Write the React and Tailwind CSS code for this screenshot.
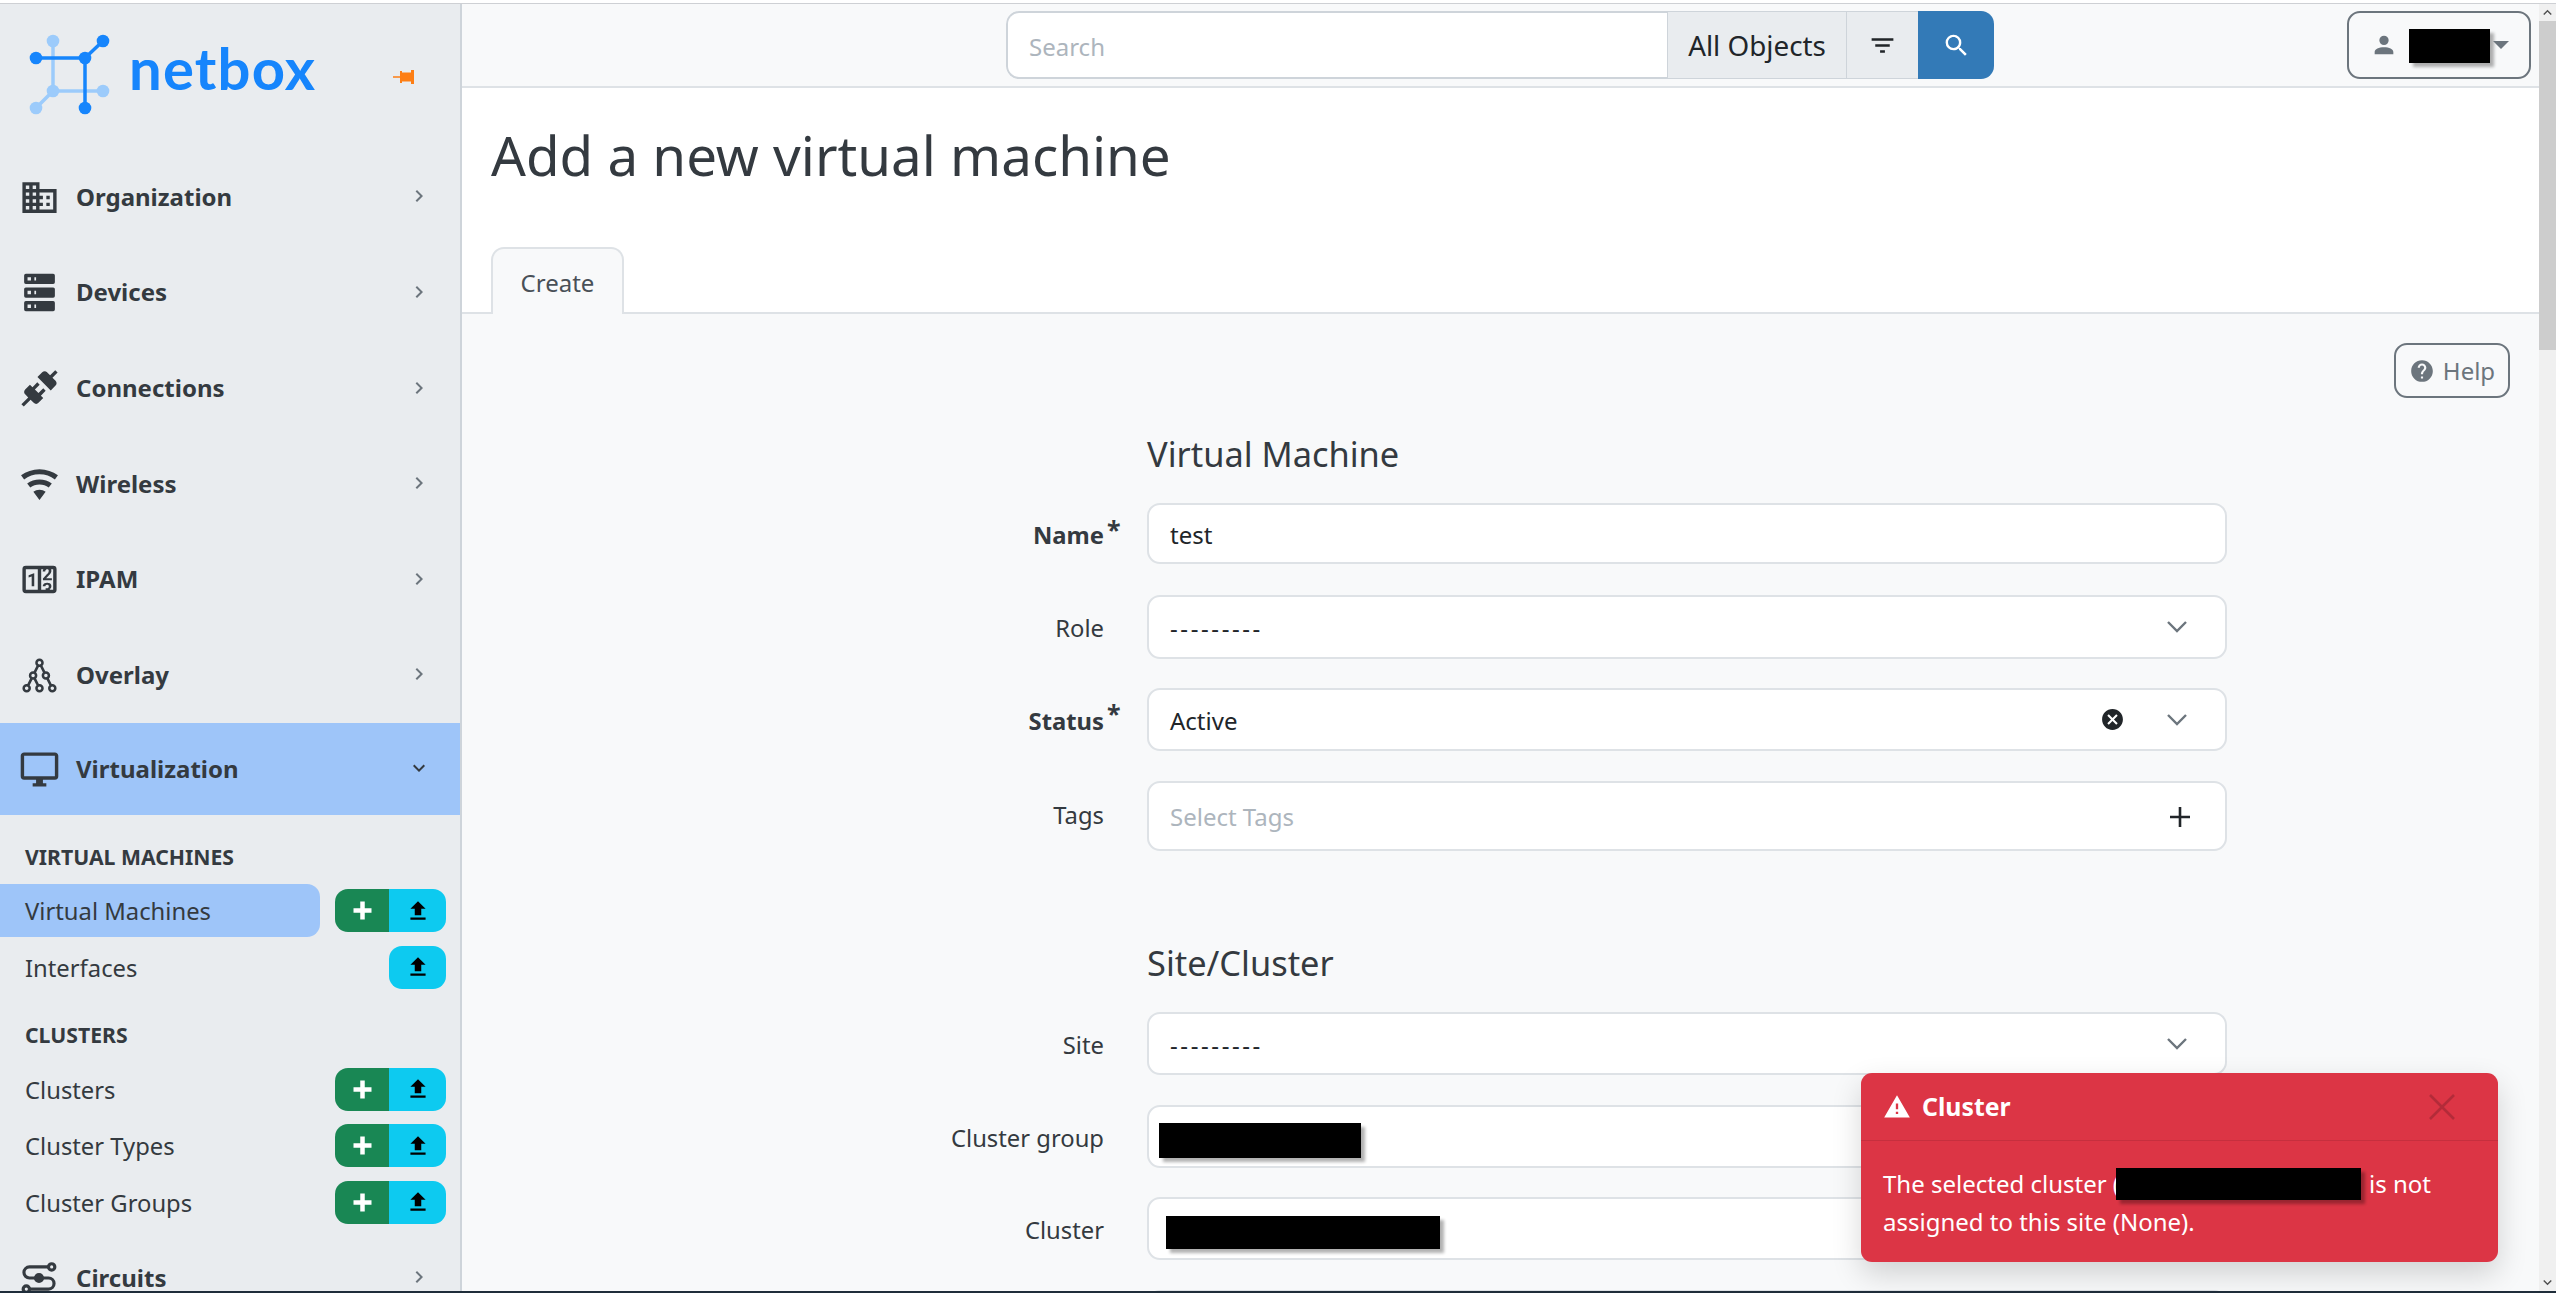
import React from 'react'

// Material Design icon paths used by the nav and the toolbar
const MDI = {
  domain: 'M18,15H16V17H18M18,11H16V13H18M20,19H12V17H14V15H12V13H14V11H12V9H20M10,7H8V5H10M10,11H8V9H10M10,15H8V13H10M10,19H8V17H10M6,7H4V5H6M6,11H4V9H6M6,15H4V13H6M6,19H4V17H6M12,7V3H2V21H22V7H12Z',
  server: 'M4,1H20A1,1 0 0,1 21,2V6A1,1 0 0,1 20,7H4A1,1 0 0,1 3,6V2A1,1 0 0,1 4,1M4,9H20A1,1 0 0,1 21,10V14A1,1 0 0,1 20,15H4A1,1 0 0,1 3,14V10A1,1 0 0,1 4,9M4,17H20A1,1 0 0,1 21,18V22A1,1 0 0,1 20,23H4A1,1 0 0,1 3,22V18A1,1 0 0,1 4,17M9,5H10V3H9V5M9,13H10V11H9V13M9,21H10V19H9V21M5,3V5H7V3H5M5,11V13H7V11H5M5,19V21H7V19H5Z',
  connection: 'M21.4 7.5C22.2 8.3 22.2 9.6 21.4 10.3L18.6 13.1L10.8 5.3L13.6 2.5C14.4 1.7 15.7 1.7 16.4 2.5L18.2 4.3L21.2 1.3L22.6 2.7L19.6 5.7L21.4 7.5M15.6 13.3L14.2 11.9L11.4 14.7L9.3 12.6L12.1 9.8L10.7 8.4L7.9 11.2L6.4 9.8L3.6 12.6C2.8 13.4 2.8 14.7 3.6 15.4L5.4 17.2L1.4 21.2L2.8 22.6L6.8 18.6L8.6 20.4C9.4 21.2 10.7 21.2 11.4 20.4L14.2 17.6L12.8 16.2L15.6 13.3Z',
  wifi: 'M12,21L15.6,16.2C14.6,15.45 13.35,15 12,15C10.65,15 9.4,15.45 8.4,16.2L12,21M12,3C7.95,3 4.21,4.34 1.2,6.6L3,9C5.5,7.12 8.62,6 12,6C15.38,6 18.5,7.12 21,9L22.8,6.6C19.79,4.34 16.05,3 12,3M12,9C9.3,9 6.81,9.89 4.8,11.4L6.6,13.8C8.1,12.67 9.97,12 12,12C14.03,12 15.9,12.67 17.4,13.8L19.2,11.4C17.19,9.89 14.7,9 12,9Z',
  counter: 'M4,4H20A2,2 0 0,1 22,6V18A2,2 0 0,1 20,20H4A2,2 0 0,1 2,18V6A2,2 0 0,1 4,4M4,6V18H11V6H4M20,18V6H18.76C19,6.54 18.95,7.07 18.95,7.13C18.88,7.8 18.41,8.5 18.24,8.75L15.91,11.3L19.23,11.28L19.24,12.5L14.04,12.47L14,11.47C14,11.47 17.05,8.24 17.2,7.95C17.34,7.67 17.91,6 16.5,6C15.27,6.05 15.41,7.3 15.41,7.3L13.87,7.31C13.87,7.31 13.88,6.65 14.25,6H13V18H15.58L15.57,17.14L16.54,17.13C16.54,17.13 17.45,16.97 17.46,16.08C17.5,15.08 16.65,15.08 16.5,15.08C16.37,15.08 15.43,15.13 15.43,15.95H13.91C13.91,15.95 13.95,13.89 16.5,13.89C19.1,13.89 18.96,15.91 18.96,15.91C18.96,15.91 19,17.16 17.85,17.63L18.37,18H20M8.92,16H7.42V10.2L5.62,10.76V9.53L8.76,8.41H8.92V16Z',
  graph: 'M19.5 17C19.37 17 19.24 17 19.11 17.04L17.5 13.79C17.95 13.34 18.25 12.7 18.25 12C18.25 10.62 17.13 9.5 15.75 9.5C15.62 9.5 15.5 9.5 15.36 9.54L13.73 6.29C14.21 5.84 14.5 5.2 14.5 4.5C14.5 3.12 13.38 2 12 2S9.5 3.12 9.5 4.5C9.5 5.2 9.79 5.84 10.26 6.29L8.64 9.54C8.5 9.5 8.38 9.5 8.25 9.5C6.87 9.5 5.75 10.62 5.75 12C5.75 12.7 6.05 13.34 6.5 13.79L4.89 17.04C4.76 17 4.63 17 4.5 17C3.12 17 2 18.12 2 19.5C2 20.88 3.12 22 4.5 22S7 20.88 7 19.5C7 18.8 6.71 18.16 6.24 17.71L7.86 14.46C8 14.5 8.12 14.5 8.25 14.5C8.38 14.5 8.5 14.5 8.64 14.46L10.27 17.71C9.79 18.16 9.5 18.8 9.5 19.5C9.5 20.88 10.62 22 12 22S14.5 20.88 14.5 19.5C14.5 18.12 13.38 17 12 17C11.87 17 11.74 17 11.61 17.04L10 13.79C10.46 13.34 10.75 12.7 10.75 12S10.46 10.66 10 10.21L11.61 6.96C11.74 7 11.87 7 12 7S12.26 7 12.39 6.96L14 10.21C13.55 10.66 13.25 11.3 13.25 12C13.25 13.38 14.37 14.5 15.75 14.5C15.88 14.5 16 14.5 16.14 14.46L17.77 17.71C17.3 18.16 17 18.8 17 19.5C17 20.88 18.12 22 19.5 22S22 20.88 22 19.5C22 18.12 20.88 17 19.5 17M4.5 20.5C3.95 20.5 3.5 20.05 3.5 19.5S3.95 18.5 4.5 18.5 5.5 18.95 5.5 19.5 5.05 20.5 4.5 20.5M13 19.5C13 20.05 12.55 20.5 12 20.5S11 20.05 11 19.5 11.45 18.5 12 18.5 13 18.95 13 19.5M7.25 12C7.25 11.45 7.7 11 8.25 11S9.25 11.45 9.25 12 8.8 13 8.25 13 7.25 12.55 7.25 12M11 4.5C11 3.95 11.45 3.5 12 3.5S13 3.95 13 4.5 12.55 5.5 12 5.5 11 5.05 11 4.5M14.75 12C14.75 11.45 15.2 11 15.75 11S16.75 11.45 16.75 12 16.3 13 15.75 13 14.75 12.55 14.75 12M19.5 20.5C18.95 20.5 18.5 20.05 18.5 19.5S18.95 18.5 19.5 18.5 20.5 18.95 20.5 19.5 20.05 20.5 19.5 20.5Z',
  monitor: 'M21,16H3V4H21M21,2H3C1.89,2 1,2.89 1,4V16A2,2 0 0,0 3,18H10V20H8V22H16V20H14V18H21A2,2 0 0,0 23,16V4C23,2.89 22.1,2 21,2Z',
  plus: 'M20 14H14V20H10V14H4V10H10V4H14V10H20V14Z',
  upload: 'M9,16V10H5L12,3L19,10H15V16H9M5,20V18H19V20H5Z',
  right: 'M8.59,16.58L13.17,12L8.59,7.41L10,6L16,12L10,18L8.59,16.58Z',
  down: 'M7.41,8.58L12,13.17L16.59,8.58L18,10L12,16L6,10L7.41,8.58Z',
  magnify: 'M9.5,3A6.5,6.5 0 0,1 16,9.5C16,11.11 15.41,12.59 14.44,13.73L14.71,14H15.5L20.5,19L19,20.5L14,15.5V14.71L13.73,14.44C12.59,15.41 11.11,16 9.5,16A6.5,6.5 0 0,1 3,9.5A6.5,6.5 0 0,1 9.5,3M9.5,5C7,5 5,7 5,9.5C5,12 7,14 9.5,14C12,14 14,12 14,9.5C14,7 12,5 9.5,5Z',
  filter: 'M6,13H18V11H6M3,6V8H21V6M10,18H14V16H10V18Z',
  account: 'M12,4A4,4 0 0,1 16,8A4,4 0 0,1 12,12A4,4 0 0,1 8,8A4,4 0 0,1 12,4M12,14C16.42,14 20,15.79 20,18V20H4V18C4,15.79 7.58,14 12,14Z',
  help: 'M15.07,11.25L14.17,12.17C13.45,12.89 13,13.5 13,15H11V14.5C11,13.39 11.45,12.39 12.17,11.67L13.41,10.41C13.78,10.05 14,9.55 14,9C14,7.89 13.1,7 12,7A2,2 0 0,0 10,9H8A4,4 0 0,1 12,5A4,4 0 0,1 16,9C16,9.88 15.64,10.67 15.07,11.25M13,19H11V17H13M12,2A10,10 0 0,0 2,12A10,10 0 0,0 12,22A10,10 0 0,0 22,12C22,6.47 17.5,2 12,2Z',
  alert: 'M13 14H11V9H13M13 18H11V16H13M1 21H23L12 2L1 21Z',
  closeCircle: 'M12,2C17.53,2 22,6.47 22,12C22,17.53 17.53,22 12,22C6.47,22 2,17.53 2,12C2,6.47 6.47,2 12,2M15.59,7L12,10.59L8.41,7L7,8.41L10.59,12L7,15.59L8.41,17L12,13.41L15.59,17L17,15.59L13.41,12L17,8.41L15.59,7Z',
}

function Icon({ d, className }) {
  return (
    <svg viewBox="0 0 24 24" fill="currentColor" className={className}>
      <path d={d} />
    </svg>
  )
}

function CircuitsIcon({ className }) {
  return (
    <svg viewBox="0 0 24 24" fill="none" stroke="currentColor" strokeWidth="2" className={className}>
      <circle cx="20" cy="5" r="2" />
      <circle cx="4" cy="19" r="2" />
      <circle cx="12" cy="12" r="2.2" fill="currentColor" />
      <path d="M18 5H6a3.5 3.5 0 0 0 0 7h12a3.5 3.5 0 0 1 0 7H6" />
    </svg>
  )
}

function Logo() {
  const dark = '#1685fc'
  const light = '#9ccbfb'
  return (
    <svg viewBox="29 34 81 81" className="w-[81px] h-[81px] shrink-0">
      <g stroke={light} strokeWidth="3.5" fill={light}>
        <path d="M53 41V91M53 91H103M53 91L36 108" fill="none" />
        <circle cx="53" cy="41" r="6.3" stroke="none" />
        <circle cx="53" cy="91" r="6.3" stroke="none" />
        <circle cx="103" cy="91" r="6.3" stroke="none" />
        <circle cx="36" cy="108" r="6.3" stroke="none" />
      </g>
      <g stroke={dark} strokeWidth="3.5" fill={dark}>
        <path d="M36 58H85M85 58L103 41M85 58V108" fill="none" />
        <circle cx="36" cy="58" r="6.3" stroke="none" />
        <circle cx="85" cy="58" r="6.3" stroke="none" />
        <circle cx="103" cy="41" r="6.3" stroke="none" />
        <circle cx="85" cy="108" r="6.3" stroke="none" />
      </g>
    </svg>
  )
}

function NavItem({ icon, custom, label }) {
  return (
    <div className="h-[95.6px] flex items-center pl-[21px] pr-[29px] text-[#343a40]">
      <span className="w-[36px] flex justify-center">
        {custom || <Icon d={icon} className="w-[41px] h-[41px] shrink-0" />}
      </span>
      <span className="ml-[19px] -mt-[1px] font-bold text-[24px]">{label}</span>
      <Icon d={MDI.right} className="ml-auto -mt-[2px] w-[24px] h-[24px] text-[#6c757d]" />
    </div>
  )
}

function SubHeading({ children, className }) {
  return (
    <div className={`h-[28px] pl-[25px] flex items-center text-[21.2px] font-bold uppercase text-[#343a40] ${className}`}>
      {children}
    </div>
  )
}

function SubItem({ label, active, add = true }) {
  return (
    <div className="h-[56.5px] flex items-center pr-[14px]">
      <div className={`w-[320px] h-[53px] pl-[25px] pt-[2px] flex items-center text-[23.8px] text-[#343a40] rounded-r-[13px] ${active ? 'bg-[#9ec5f9]' : ''}`}>
        {label}
      </div>
      <div className="ml-auto flex h-[43px]">
        {add && (
          <span className="w-[54px] bg-[#198754] rounded-l-[13px] flex items-center justify-center text-white">
            <Icon d={MDI.plus} className="w-[27px] h-[27px]" />
          </span>
        )}
        <span className={`w-[57px] bg-[#0dcaf0] flex items-center justify-center text-black ${add ? 'rounded-r-[13px]' : 'rounded-[13px]'}`}>
          <Icon d={MDI.upload} className="w-[26px] h-[26px]" />
        </span>
      </div>
    </div>
  )
}

function Sidebar() {
  return (
    <aside className="w-[462px] shrink-0 bg-[#e9ecef] border-r-2 border-[#ced4da] overflow-hidden">
      <div className="h-[145.6px] pl-[29px] pr-[48px] pt-[30px] flex items-start">
        <Logo />
        <span className="ml-[19px] -mt-[1px] font-['Lato',sans-serif] font-bold text-[#1685fc] text-[58px] leading-[70px] tracking-[1.2px]">netbox</span>
        <svg viewBox="0 0 21 14" className="ml-auto mt-[36px] -mr-[2px] w-[21px] h-[14px] text-[#fd7e14]" fill="currentColor">
          <path d="M0 6.2h7V1h2v1.5h9V0h3v14h-3v-2.5H9V13H7V7.8H0z" />
        </svg>
      </div>
      <NavItem icon={MDI.domain} label="Organization" />
      <NavItem icon={MDI.server} label="Devices" />
      <NavItem icon={MDI.connection} label="Connections" />
      <NavItem icon={MDI.wifi} label="Wireless" />
      <NavItem icon={MDI.counter} label="IPAM" />
      <NavItem icon={MDI.graph} label="Overlay" />
      <div className="h-[92px] bg-[#9ec5f9] flex items-center pl-[21px] pr-[29px] text-[#343a40]">
        <span className="w-[36px] flex justify-center">
          <Icon d={MDI.monitor} className="w-[41px] h-[41px] shrink-0" />
        </span>
        <span className="ml-[19px] font-bold text-[24px]">Virtualization</span>
        <Icon d={MDI.down} className="ml-auto -mt-[2px] w-[24px] h-[24px]" />
      </div>
      <SubHeading className="mt-[28px] mb-[11.5px]">Virtual Machines</SubHeading>
      <SubItem label="Virtual Machines" active />
      <SubItem label="Interfaces" add={false} />
      <SubHeading className="mt-[25px] mb-[12.5px]">Clusters</SubHeading>
      <SubItem label="Clusters" />
      <SubItem label="Cluster Types" />
      <SubItem label="Cluster Groups" />
      <NavItem custom={<CircuitsIcon className="w-[38px] h-[38px] shrink-0" />} label="Circuits" />
    </aside>
  )
}

function Redacted({ className }) {
  return <span className={`block bg-black shadow-[4px_4px_3px_rgba(0,0,0,0.3)] ${className}`} />
}

function TopBar() {
  return (
    <div className="h-[84px] shrink-0 bg-[#f8f9fa] border-b-2 border-[#dee2e6] flex items-center pr-[8px]">
      <div className="ml-[544px] w-[988px] h-[68px] flex rounded-[13px] overflow-hidden">
        <div className="w-[661px] bg-white border-2 border-[#ced4da] border-r-0 rounded-l-[13px] pl-[21px] pt-[3px] flex items-center text-[24px] text-[#adb5bd]">
          Search
        </div>
        <div className="w-[180px] bg-[#e9ecef] border border-[#ced4da] pt-[1px] flex items-center justify-center text-[27.8px] text-[#212529]">
          All Objects
        </div>
        <div className="w-[71px] bg-[#e9ecef] border-y border-[#ced4da] flex items-center justify-center text-[#212529]">
          <Icon d={MDI.filter} className="w-[29px] h-[29px]" />
        </div>
        <div className="w-[76px] bg-[#337ab7] flex items-center justify-center text-white">
          <Icon d={MDI.magnify} className="w-[29px] h-[29px]" />
        </div>
      </div>
      <div className="ml-auto w-[184px] h-[68px] rounded-[13px] border-2 border-[#6c757d] flex items-center pl-[21px] text-[#6c757d]">
        <Icon d={MDI.account} className="w-[28px] h-[28px]" />
        <Redacted className="ml-[11px] mt-[2px] w-[81px] h-[34px]" />
        <span className="ml-[3px] w-0 h-0 border-x-[8px] border-x-transparent border-t-[8px] border-t-[#6c757d]" />
      </div>
    </div>
  )
}

function Field({ label, required, labelClass = 'pt-[4px]', children, className = '' }) {
  return (
    <div className={`flex ${className}`}>
      <div className={`w-[642px] flex items-center justify-end text-[23.8px] text-[#343a40] ${labelClass} ${required ? 'font-bold' : ''}`}>
        {label}
        {required && <span className="self-start mt-[9px] -mr-[21px] w-[21px] pl-[3px] text-[25px] leading-[25px] font-bold">*</span>}
      </div>
      <div className="ml-[43px] w-[1080px] bg-white border-2 border-[#dee2e6] rounded-[13px] flex items-center pl-[21px] pr-[38px] pt-[2px] text-[24px] text-[#212529]">
        {children}
      </div>
    </div>
  )
}

function SelectArrow() {
  return (
    <svg viewBox="0 0 20 12" fill="none" stroke="#6c757d" strokeWidth="2.4" className="w-[20px] h-[12px] shrink-0 -mt-[2px]">
      <path d="M1 1l9 9 9-9" />
    </svg>
  )
}

function Dashes() {
  return <span className="tracking-[2.6px]">---------</span>
}

function Content() {
  return (
    <div className="flex-1 min-h-0 bg-[#f8f9fa] overflow-hidden">
      <div className="flex justify-end pr-[29px] pt-[29px]">
        <div className="w-[116px] h-[55px] rounded-[13px] border-2 border-[#6c757d] flex items-center justify-center gap-[8px] text-[24px] text-[#6c757d]">
          <Icon d={MDI.help} className="w-[26px] h-[26px]" />
          Help
        </div>
      </div>
      <div className="ml-[685px] mt-[33px] h-[46px] flex items-center text-[34.4px] text-[#343a40]">Virtual Machine</div>
      <Field label="Name" required labelClass="pt-[5px]" className="h-[61px] mt-[26px]">test</Field>
      <Field label="Role" className="h-[64px] mt-[31px]">
        <Dashes />
        <span className="ml-auto"><SelectArrow /></span>
      </Field>
      <Field label="Status" required className="h-[63px] mt-[29px]">
        <span>Active</span>
        <Icon d={MDI.closeCircle} className="ml-auto mr-[42px] -mt-[2px] w-[25px] h-[25px] text-[#212529]" />
        <SelectArrow />
      </Field>
      <Field label="Tags" labelClass="pt-[0px]" className="h-[70px] mt-[30px]">
        <span className="text-[#adb5bd]">Select Tags</span>
        <svg viewBox="0 0 20 20" className="ml-auto -mr-[3px] w-[20px] h-[20px] shrink-0" fill="none" stroke="#212529" strokeWidth="2.6">
          <path d="M10 0v20M0 10h20" />
        </svg>
      </Field>
      <div className="ml-[685px] mt-[89px] h-[46px] flex items-center text-[34.4px] text-[#343a40]">Site/Cluster</div>
      <Field label="Site" className="h-[63px] mt-[26px]">
        <Dashes />
        <span className="ml-auto"><SelectArrow /></span>
      </Field>
      <Field label="Cluster group" className="h-[63px] mt-[30px]">
        <Redacted className="-ml-[11px] mt-[6px] w-[202px] h-[35px]" />
      </Field>
      <Field label="Cluster" className="h-[63px] mt-[29px]">
        <Redacted className="-ml-[4px] mt-[6px] w-[274px] h-[33px]" />
      </Field>
      <Field label="" className="h-[63px] mt-[30px]" />
    </div>
  )
}

function Toast() {
  return (
    <div className="absolute left-[1861px] top-[1073px] w-[637px] h-[189px] rounded-[11px] bg-[#dc3545] text-white shadow-[0_12px_30px_rgba(0,0,0,0.16)]">
      <div className="h-[68px] border-b border-[#c62f3e] pl-[22px] pr-[43px] flex items-center">
        <Icon d={MDI.alert} className="w-[28px] h-[28px] shrink-0" />
        <span className="ml-[11px] pt-[1px] font-bold text-[24.8px]">Cluster</span>
        <svg viewBox="0 0 26 26" className="ml-auto w-[26px] h-[26px]" fill="none" stroke="#b32b39" strokeWidth="2.6">
          <path d="M1 1l24 24M25 1L1 25" />
        </svg>
      </div>
      <div className="pl-[22px] pt-[24px] text-[24px] leading-[38px]">
        <div className="flex items-center whitespace-pre">
          The selected cluster (
          <Redacted className="-ml-[4px] -mt-[1px] w-[245px] h-[32px]" />
          <span className="ml-[8px]">is not</span>
        </div>
        <div>assigned to this site (None).</div>
      </div>
    </div>
  )
}

export default function App() {
  return (
    <div className="relative w-[2556px] h-[1293px] flex flex-col overflow-hidden bg-white font-['Noto_Sans',sans-serif]">
      <div className="h-[4px] shrink-0 bg-white border-b-[1px] border-[#ced0d4]" />
      <div className="flex-1 min-h-0 flex">
        <Sidebar />
        <main className="flex-1 min-w-0 flex flex-col">
          <TopBar />
          <div className="h-[226px] shrink-0 bg-white border-b-2 border-[#dee2e6] flex flex-col pl-[29px]">
            <h1 className="mt-[34px] text-[54.7px] leading-[66px] text-[#343a40]">Add a new virtual machine</h1>
            <div className="mt-auto -mb-[2px] w-[133px] h-[67px] pt-[3px] bg-[#f8f9fa] border-2 border-b-0 border-[#dee2e6] rounded-t-[13px] flex items-center justify-center text-[24px] text-[#495057]">
              Create
            </div>
          </div>
          <Content />
        </main>
        <div className="w-[17px] shrink-0 bg-[#f0f0f0] flex flex-col">
          <div className="h-[17px] flex items-center justify-center text-[#505050]">
            <Icon d={MDI.down} className="w-[17px] h-[17px] rotate-180" />
          </div>
          <div className="h-[329px] bg-[#cdcdcd]" />
          <div className="mt-auto h-[17px] flex items-center justify-center text-[#505050]">
            <Icon d={MDI.down} className="w-[17px] h-[17px]" />
          </div>
        </div>
      </div>
      <div className="h-[2px] shrink-0 bg-[#1f2d3a]" />
      <Toast />
    </div>
  )
}
